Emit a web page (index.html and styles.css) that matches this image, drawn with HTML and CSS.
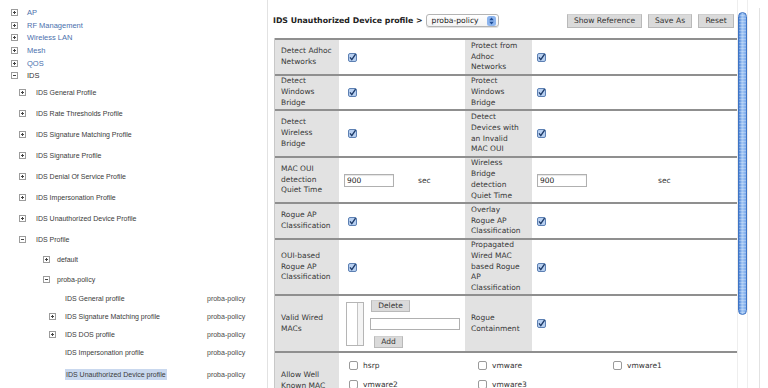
FILE: index.html
```html
<!DOCTYPE html>
<html>
<head>
<meta charset="utf-8">
<title>IDS Unauthorized Device profile</title>
<link rel="stylesheet" href="styles.css">
</head>
<body>
<div class="page">
  <nav class="tree">
    <div class="t1"><span class="box plus"></span><span class="lnk">AP</span></div>
    <div class="t1"><span class="box plus"></span><span class="lnk">RF Management</span></div>
    <div class="t1"><span class="box plus"></span><span class="lnk">Wireless LAN</span></div>
    <div class="t1"><span class="box plus"></span><span class="lnk">Mesh</span></div>
    <div class="t1"><span class="box plus"></span><span class="lnk">QOS</span></div>
    <div class="t1"><span class="box minus"></span><span class="dk">IDS</span></div>
    <div class="t2"><span class="box plus"></span><span>IDS General Profile</span></div>
    <div class="t2"><span class="box plus"></span><span>IDS Rate Thresholds Profile</span></div>
    <div class="t2"><span class="box plus"></span><span>IDS Signature Matching Profile</span></div>
    <div class="t2"><span class="box plus"></span><span>IDS Signature Profile</span></div>
    <div class="t2"><span class="box plus"></span><span>IDS Denial Of Service Profile</span></div>
    <div class="t2"><span class="box plus"></span><span>IDS Impersonation Profile</span></div>
    <div class="t2"><span class="box plus"></span><span>IDS Unauthorized Device Profile</span></div>
    <div class="t2"><span class="box minus"></span><span>IDS Profile</span></div>
    <div class="t3"><span class="box plus"></span><span>default</span></div>
    <div class="t3"><span class="box minus"></span><span>proba-policy</span></div>
    <div class="t4"><span class="nobox"></span><span class="nm"><span>IDS General profile</span></span><span class="pol">proba-policy</span></div>
    <div class="t4"><span class="box plus"></span><span class="nm"><span>IDS Signature Matching profile</span></span><span class="pol">proba-policy</span></div>
    <div class="t4"><span class="box plus"></span><span class="nm"><span>IDS DOS profile</span></span><span class="pol">proba-policy</span></div>
    <div class="t4"><span class="nobox"></span><span class="nm"><span>IDS Impersonation profile</span></span><span class="pol">proba-policy</span></div>
    <div class="t4 last"><span class="nobox"></span><span class="nm"><span class="sel">IDS Unauthorized Device profile</span></span><span class="pol">proba-policy</span></div>
  </nav>

  <main class="content">
    <div class="head">
      <span class="title">IDS Unauthorized Device profile &gt;</span>
      <span class="select"><span class="seltxt">proba-policy</span>
        <svg class="arrows" viewBox="0 0 9 10" width="9" height="10"><rect x="0" y="0" width="9" height="10" rx="2.5" fill="#8db5ee"/><path d="M2.2 4.2 L4.5 1.6 L6.8 4.2 Z M2.2 5.8 L4.5 8.4 L6.8 5.8 Z" fill="#1f4e98"/></svg>
      </span>
      <span class="spacer"></span>
      <span class="btn w1">Show Reference</span>
      <span class="btn w2">Save As</span>
      <span class="btn w3">Reset</span>
    </div>

    <div class="grid">
      <div class="lab">Detect Adhoc Networks</div>
      <div class="val v1"><svg class="cb" viewBox="0 0 9 9"><rect x=".5" y=".5" width="8" height="8" rx="1.5" fill="#b7cff0" stroke="#5d80b3"/><path d="M2 4.4 L3.8 6.6 L7.6 1.2" stroke="#1d3b69" stroke-width="1.4" fill="none"/></svg></div>
      <div class="lab">Protect from Adhoc Networks</div>
      <div class="val v2"><svg class="cb" viewBox="0 0 9 9"><rect x=".5" y=".5" width="8" height="8" rx="1.5" fill="#b7cff0" stroke="#5d80b3"/><path d="M2 4.4 L3.8 6.6 L7.6 1.2" stroke="#1d3b69" stroke-width="1.4" fill="none"/></svg></div>

      <div class="lab">Detect Windows Bridge</div>
      <div class="val v1"><svg class="cb" viewBox="0 0 9 9"><rect x=".5" y=".5" width="8" height="8" rx="1.5" fill="#b7cff0" stroke="#5d80b3"/><path d="M2 4.4 L3.8 6.6 L7.6 1.2" stroke="#1d3b69" stroke-width="1.4" fill="none"/></svg></div>
      <div class="lab">Protect Windows Bridge</div>
      <div class="val v2"><svg class="cb" viewBox="0 0 9 9"><rect x=".5" y=".5" width="8" height="8" rx="1.5" fill="#b7cff0" stroke="#5d80b3"/><path d="M2 4.4 L3.8 6.6 L7.6 1.2" stroke="#1d3b69" stroke-width="1.4" fill="none"/></svg></div>

      <div class="lab">Detect Wireless Bridge</div>
      <div class="val v1"><svg class="cb" viewBox="0 0 9 9"><rect x=".5" y=".5" width="8" height="8" rx="1.5" fill="#b7cff0" stroke="#5d80b3"/><path d="M2 4.4 L3.8 6.6 L7.6 1.2" stroke="#1d3b69" stroke-width="1.4" fill="none"/></svg></div>
      <div class="lab">Detect Devices with an Invalid MAC OUI</div>
      <div class="val v2"><svg class="cb" viewBox="0 0 9 9"><rect x=".5" y=".5" width="8" height="8" rx="1.5" fill="#b7cff0" stroke="#5d80b3"/><path d="M2 4.4 L3.8 6.6 L7.6 1.2" stroke="#1d3b69" stroke-width="1.4" fill="none"/></svg></div>

      <div class="lab">MAC OUI detection Quiet Time</div>
      <div class="val v1 tm"><input class="num" type="text" value="900"><span class="sec s1">sec</span></div>
      <div class="lab">Wireless Bridge detection Quiet Time</div>
      <div class="val v2 tm"><input class="num" type="text" value="900"><span class="sec s2">sec</span></div>

      <div class="lab">Rogue AP Classification</div>
      <div class="val v1"><svg class="cb" viewBox="0 0 9 9"><rect x=".5" y=".5" width="8" height="8" rx="1.5" fill="#b7cff0" stroke="#5d80b3"/><path d="M2 4.4 L3.8 6.6 L7.6 1.2" stroke="#1d3b69" stroke-width="1.4" fill="none"/></svg></div>
      <div class="lab">Overlay Rogue AP Classification</div>
      <div class="val v2"><svg class="cb" viewBox="0 0 9 9"><rect x=".5" y=".5" width="8" height="8" rx="1.5" fill="#b7cff0" stroke="#5d80b3"/><path d="M2 4.4 L3.8 6.6 L7.6 1.2" stroke="#1d3b69" stroke-width="1.4" fill="none"/></svg></div>

      <div class="lab">OUI-based Rogue AP Classification</div>
      <div class="val v1"><svg class="cb" viewBox="0 0 9 9"><rect x=".5" y=".5" width="8" height="8" rx="1.5" fill="#b7cff0" stroke="#5d80b3"/><path d="M2 4.4 L3.8 6.6 L7.6 1.2" stroke="#1d3b69" stroke-width="1.4" fill="none"/></svg></div>
      <div class="lab">Propagated Wired MAC based Rogue AP Classification</div>
      <div class="val v2"><svg class="cb" viewBox="0 0 9 9"><rect x=".5" y=".5" width="8" height="8" rx="1.5" fill="#b7cff0" stroke="#5d80b3"/><path d="M2 4.4 L3.8 6.6 L7.6 1.2" stroke="#1d3b69" stroke-width="1.4" fill="none"/></svg></div>

      <div class="lab">Valid Wired MACs</div>
      <div class="val v1 macs">
        <div class="list"><span class="lsb"></span></div>
        <div class="macctl">
          <span class="btn sm del">Delete</span>
          <input class="macin" type="text" value="">
          <span class="btn sm add">Add</span>
        </div>
      </div>
      <div class="lab">Rogue Containment</div>
      <div class="val v2"><svg class="cb" viewBox="0 0 9 9"><rect x=".5" y=".5" width="8" height="8" rx="1.5" fill="#b7cff0" stroke="#5d80b3"/><path d="M2 4.4 L3.8 6.6 L7.6 1.2" stroke="#1d3b69" stroke-width="1.4" fill="none"/></svg></div>

      <div class="lab">Allow Well Known MAC</div>
      <div class="val wide">
        <div class="opts">
          <label class="opt"><svg class="cb" viewBox="0 0 9 9"><rect x=".5" y=".5" width="8" height="8" rx="1.5" fill="#fff" stroke="#9a9a9a"/></svg><span>hsrp</span></label>
          <label class="opt"><svg class="cb" viewBox="0 0 9 9"><rect x=".5" y=".5" width="8" height="8" rx="1.5" fill="#fff" stroke="#9a9a9a"/></svg><span>vmware</span></label>
          <label class="opt"><svg class="cb" viewBox="0 0 9 9"><rect x=".5" y=".5" width="8" height="8" rx="1.5" fill="#fff" stroke="#9a9a9a"/></svg><span>vmware1</span></label>
          <label class="opt"><svg class="cb" viewBox="0 0 9 9"><rect x=".5" y=".5" width="8" height="8" rx="1.5" fill="#fff" stroke="#9a9a9a"/></svg><span>vmware2</span></label>
          <label class="opt"><svg class="cb" viewBox="0 0 9 9"><rect x=".5" y=".5" width="8" height="8" rx="1.5" fill="#fff" stroke="#9a9a9a"/></svg><span>vmware3</span></label>
        </div>
      </div>
    </div>
  </main>

  <div class="scroll"><div class="thumb"></div></div>
  <div class="edge"></div>
</div>
</body>
</html>
```

FILE: styles.css
```css
* { box-sizing: border-box; }
html, body { margin: 0; padding: 0; background: #fff; }
body { width: 768px; height: 388px; overflow: hidden; font-family: "DejaVu Sans", Verdana, sans-serif; color: #333; }

.page { display: flex; height: 388px; overflow: hidden; }

/* ---------- tree ---------- */
.tree { width: 268px; flex: none; border-right: 1px solid #e2e2e2; padding-top: 6px; font-family: "Liberation Sans", Arial, sans-serif; font-size: 7px; color: #3a3a3a; }
.tree > div { display: flex; align-items: center; white-space: nowrap; }
.box { width: 7px; height: 7px; flex: none; border: 1px solid #9c9c9c; background-color: #fff; }
.box.plus { background: linear-gradient(#444, #444) center / 3px 1px no-repeat, linear-gradient(#444, #444) center / 1px 3px no-repeat, #fff; }
.box.minus { background: linear-gradient(#444, #444) center / 3px 1px no-repeat, #fff; }
.nobox { width: 7px; height: 7px; flex: none; }
.t1 { height: 12.7px; padding-left: 11px; gap: 9px; font-size: 7.5px; }
.t1 .lnk { color: #4a70ad; }
.t1 .dk { color: #333; }
.t2 { height: 21px; padding-left: 19px; gap: 10px; }
.t3 { height: 19.5px; padding-left: 43px; gap: 7px; }
.t4 { height: 18.2px; padding-left: 49px; gap: 9px; }
.t4.last { height: 21px; padding-top: 4px; }
.nm { width: 133px; flex: none; }
.sel { background: #c9d8ee; padding: 2px 1px; }
.pol { color: #4a4a4a; }

/* ---------- content ---------- */
.content { width: 469px; flex: none; padding-left: 6px; }
.head { height: 38px; padding-top: 3px; display: flex; align-items: center; padding-right: 3px; }
.title { font-weight: bold; font-size: 7.8px; color: #222; margin-left: -1px; }
.select { margin-left: 3px; width: 73px; height: 13px; border: 1px solid #b4b4b4; border-radius: 3px; background: linear-gradient(#fff, #f3f3f3); display: flex; align-items: center; padding-left: 5px; font-size: 7.6px; color: #222; box-shadow: 0 1px 0 #e2e2e2; }
.seltxt { flex: 1; }
.arrows { margin-right: 2px; }
.spacer { flex: 1; }
.btn { display: inline-flex; align-items: center; justify-content: center; height: 14px; background: #dadada; border: 1px solid #b9b9b9; border-top-color: #cfcfcf; font-size: 7.6px; color: #333; }
.btn.w1 { width: 75px; }
.btn.w2 { width: 44px; margin-left: 6px; }
.btn.w3 { width: 36px; margin-left: 6px; }

.grid { display: grid; grid-template-columns: 64px 126px 67px 206px; grid-template-rows: 36px 35px 47px 46px 36px 56px 57px 57px; width: 463px; border-left: 1px solid #c8c8c8; }
.grid > div { border-top: 2px solid #8f8f8f; display: flex; align-items: center; }
.lab { background: #e2e2e2; padding: 0 6px 0 6px; font-size: 7.5px; line-height: 10.8px; color: #383838; }
.grid > .lab:nth-child(4n+3) { padding-right: 9px; }
.val { background: #fff; }
.v1 { padding-left: 5px; }
.v2 { padding-left: 5px; }
.cb { width: 9px; height: 9px; flex: none; display: block; }
.v1 > .cb { margin-left: 4px; }

.num { width: 50px; height: 13px; border: 1px solid #b0b0b0; box-shadow: inset 0 1px 1px #e4e4e4; font-family: "DejaVu Sans", Verdana, sans-serif; font-size: 7.5px; padding: 0 2px; margin: 0; color: #222; outline: none; }
.sec { font-size: 7.5px; color: #333; }
.s1 { margin-left: 24px; }
.s2 { margin-left: 71px; }

.macs { align-items: center; gap: 6px; }
.list { margin-left: 2px; width: 18px; height: 44px; border: 1px solid #b5b5b5; display: flex; justify-content: flex-end; background: #fff; }
.lsb { width: 6px; height: 100%; border-left: 1px solid #c4c4c4; background: #f4f4f4; }
.macctl { display: flex; flex-direction: column; align-items: flex-start; gap: 6px; }
.btn.sm { height: 12px; font-size: 7.5px; }
.del { width: 39px; margin-left: 1px; }
.add { width: 29px; margin-left: 4px; }
.macin { width: 90px; height: 12px; border: 1px solid #b0b0b0; margin: 0; padding: 0; outline: none; }

.wide { grid-column: span 3; align-items: flex-start !important; padding: 7px 0 0 10px; }
.opts { display: grid; grid-template-columns: 129px 135px auto; row-gap: 9px; font-size: 7.5px; color: #333; }
.opt { display: flex; align-items: center; gap: 5px; height: 10px; }

/* ---------- scrollbar ---------- */
.scroll { width: 11px; flex: none; padding-top: 12px; border-left: 1px solid #eee; border-right: 1px solid #eee; }
.thumb { height: 303px; width: 9px; border-radius: 5px; border: 1px solid #3f74c4;
  background: repeating-linear-gradient(#0000 0 2px, rgba(255,255,255,.25) 2px 3px), linear-gradient(to right, #4b83d6, #a9cbf5 45%, #7aa9ea); }
.edge { width: 12px; flex: none; border-right: 1px solid #e2e2e2; margin-top: 8px; }
```
